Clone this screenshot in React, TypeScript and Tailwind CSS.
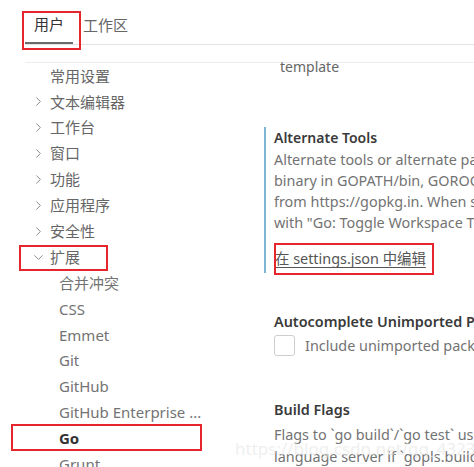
import { ChevronRight, ChevronDown } from 'lucide-react';

const font = { fontFamily: '"Noto Sans", "Noto Sans CJK SC", sans-serif' };

type TreeItem = { label: string; level: 0 | 1; chevron?: 'right' | 'down'; mark?: boolean; active?: boolean };

const tree: TreeItem[] = [
  { label: '常用设置', level: 0 },
  { label: '文本编辑器', level: 0, chevron: 'right' },
  { label: '工作台', level: 0, chevron: 'right' },
  { label: '窗口', level: 0, chevron: 'right' },
  { label: '功能', level: 0, chevron: 'right' },
  { label: '应用程序', level: 0, chevron: 'right' },
  { label: '安全性', level: 0, chevron: 'right' },
  { label: '扩展', level: 0, chevron: 'down', mark: true },
  { label: '合并冲突', level: 1 },
  { label: 'CSS', level: 1 },
  { label: 'Emmet', level: 1 },
  { label: 'Git', level: 1 },
  { label: 'GitHub', level: 1 },
  { label: 'GitHub Enterprise ...', level: 1 },
  { label: 'Go', level: 1, active: true },
  { label: 'Grunt', level: 1 },
];

function TreeRow({ item }: { item: TreeItem }) {
  return (
    <div className="relative flex h-[25.9px] shrink-0 items-center">
      {item.chevron && (
        <span className="absolute left-[6px] text-[#7a7a7a]">
          {item.chevron === 'right' ? (
            <ChevronRight size={15} strokeWidth={1.4} />
          ) : (
            <ChevronDown size={15} strokeWidth={1.4} />
          )}
        </span>
      )}
      <span
        className={
          item.level === 0
            ? 'pl-[25px] text-[15px] text-[#666666]'
            : item.active
              ? 'pl-[34px] text-[15px] font-bold text-[#333333]'
              : 'pl-[34px] text-[15px] text-[#737373]'
        }
      >
        {item.label}
      </span>
      {item.mark && (
        <span className="absolute left-[-6px] top-[1px] h-[26px] w-[89px] border-2 border-[#e5262c]" />
      )}
      {item.active && (
        <span className="absolute left-[-14px] top-[-1px] h-[27px] w-[191px] border-2 border-[#e5262c]" />
      )}
    </div>
  );
}

export default function App() {
  return (
    <div className="relative h-[467px] w-[474px] overflow-hidden bg-white" style={font}>
      {/* tabs */}
      <div className="ml-[25px] flex h-[45px] items-end border-b border-[#e2e2e2]">
        <div className="relative flex h-[44px] w-[48px] items-center justify-center border-b-2 border-[#6b6b6b] pt-[7px] text-[15px] text-[#333333]">
          用户
          <span className="absolute left-[-3px] top-[11px] h-[39px] w-[59px] border-2 border-[#e5262c]" />
        </div>
        <div className="flex h-[44px] items-center pl-[10px] pt-[7px] text-[15px] text-[#666666]">工作区</div>
      </div>
      <div className="ml-[25px] h-[18px] border-b border-[#ededed]" />

      <div className="ml-[25px] flex">
        {/* tree */}
        <div className="flex w-[239px] shrink-0 flex-col">
          {tree.map((item) => (
            <TreeRow key={item.label} item={item} />
          ))}
        </div>

        {/* settings */}
        <div className="flex min-w-0 flex-1 flex-col whitespace-nowrap">
          <div className="-mt-[6px] pl-[16px] text-[14px] leading-[20px] text-[#666666]">template</div>

          <div className="mt-[50px] border-l-2 border-[#7db6d6] pl-[8px] pb-[3px]">
            <div className="text-[14px] font-semibold leading-[22px] text-[#3a3a3a]">Alternate Tools</div>
            <div className="text-[14.4px] leading-[21px] text-[#737373]">
              <div>Alternate tools or alternate paths for the same tools used</div>
              <div>binary in GOPATH/bin, GOROOT/bin, PATH, or a package</div>
              <div>from https://gopkg.in. When specified as a workspace setting</div>
              <div>with "Go: Toggle Workspace Trust Flag" command.</div>
            </div>
            <div className="mt-[15px] flex pl-[1px]">
              <span className="relative text-[14.4px] leading-[22px] text-[#555555] underline underline-offset-[3px]">
                在 settings.json 中编辑
                <span className="absolute left-[-1px] top-[-5px] h-[32px] w-[160px] border-2 border-[#e5262c]" />
              </span>
            </div>
          </div>

          <div className="mt-[38px] pl-[10px]">
            <div className="text-[14.4px] font-semibold leading-[22px] text-[#3a3a3a]">Autocomplete Unimported Packages</div>
            <div className="mt-[2px] flex items-center gap-[10px]">
              <span className="h-[21px] w-[21px] shrink-0 rounded-[3px] border border-[#cecece]" />
              <span className="text-[14.4px] text-[#737373]">Include unimported packages in auto-complete suggestions.</span>
            </div>
          </div>

          <div className="mt-[42px] pl-[10px]">
            <div className="text-[14.4px] font-semibold leading-[22px] text-[#3a3a3a]">Build Flags</div>
            <div className="mt-[3px] text-[14.4px] leading-[22px] text-[#737373]">
              <div>Flags to `go build`/`go test` used during build-on-save</div>
              <div>language server if `gopls.build.buildFlags` is not set.</div>
            </div>
          </div>
        </div>
      </div>

      {/* watermark */}
      <div className="pointer-events-none absolute left-[235px] top-[436px] whitespace-nowrap text-[17px] text-[#e8e8e8]/70">
        https://blog.csdn.net/qq_43235867
      </div>
    </div>
  );
}
